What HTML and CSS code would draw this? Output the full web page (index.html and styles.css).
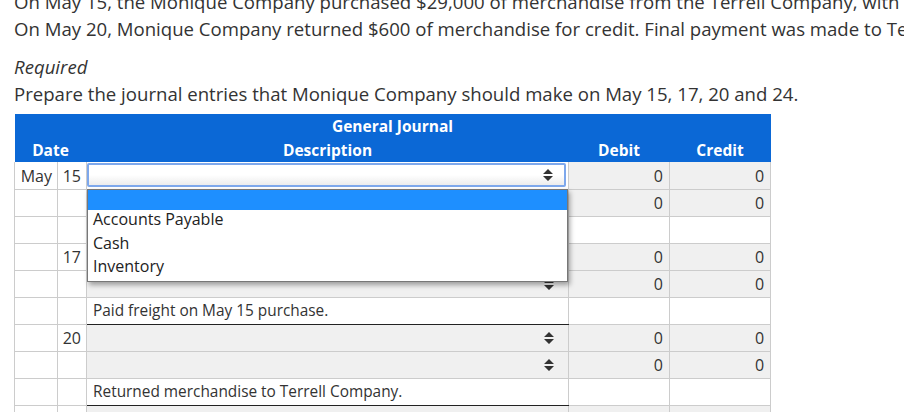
FILE: index.html
```html
<!DOCTYPE html>
<html>
<head>
<meta charset="utf-8">
<link rel="stylesheet" href="styles.css">
</head>
<body>
<div class="page">
  <p class="intro">On May 15, the Monique Company purchased $29,000 of merchandise from the Terrell Company, with terms of 2/10, n/30.</p>
  <p class="intro">On May 20, Monique Company returned $600 of merchandise for credit. Final payment was made to Terrell Company on May 24.</p>
  <p class="req"><em>Required</em><br>Prepare the journal entries that Monique Company should make on May 15, 17, 20 and 24.</p>
  <table class="journal">
    <colgroup>
      <col class="c-mon"><col class="c-day"><col class="c-desc"><col class="c-amt"><col class="c-amt">
    </colgroup>
    <thead>
      <tr class="h1"><th colspan="5">General Journal</th></tr>
      <tr class="h2"><th colspan="2">Date</th><th>Description</th><th>Debit</th><th>Credit</th></tr>
    </thead>
    <tbody>
      <tr>
        <td class="mon">May</td><td class="day">15</td>
        <td class="desc sel-cell">
          <div class="anchor">
            <div class="select focus"><svg class="arr" viewBox="0 0 10 12" width="10" height="12"><path d="M5 0 L10 5 L0 5 Z M0 7 L10 7 L5 12 Z" fill="#333"/></svg></div>
            <ul class="menu">
              <li class="hl">&nbsp;</li>
              <li class="first">Accounts Payable</li>
              <li>Cash</li>
              <li>Inventory</li>
            </ul>
          </div>
        </td>
        <td class="amt">0</td><td class="amt">0</td>
      </tr>
      <tr>
        <td></td><td></td>
        <td class="desc grey"><div class="select"><svg class="arr" viewBox="0 0 10 12" width="10" height="12"><path d="M5 0 L10 5 L0 5 Z M0 7 L10 7 L5 12 Z" fill="#333"/></svg></div></td>
        <td class="amt">0</td><td class="amt">0</td>
      </tr>
      <tr>
        <td></td><td></td><td class="desc"></td><td class="blank"></td><td class="blank"></td>
      </tr>
      <tr>
        <td></td><td class="day">17</td>
        <td class="desc grey"><div class="select"><svg class="arr" viewBox="0 0 10 12" width="10" height="12"><path d="M5 0 L10 5 L0 5 Z M0 7 L10 7 L5 12 Z" fill="#333"/></svg></div></td>
        <td class="amt">0</td><td class="amt">0</td>
      </tr>
      <tr>
        <td></td><td></td>
        <td class="desc grey"><div class="select"><svg class="arr" viewBox="0 0 10 12" width="10" height="12"><path d="M5 0 L10 5 L0 5 Z M0 7 L10 7 L5 12 Z" fill="#333"/></svg></div></td>
        <td class="amt">0</td><td class="amt">0</td>
      </tr>
      <tr>
        <td></td><td></td><td class="desc note">Paid freight on May 15 purchase.</td><td class="blank"></td><td class="blank"></td>
      </tr>
      <tr>
        <td></td><td class="day">20</td>
        <td class="desc grey"><div class="select"><svg class="arr" viewBox="0 0 10 12" width="10" height="12"><path d="M5 0 L10 5 L0 5 Z M0 7 L10 7 L5 12 Z" fill="#333"/></svg></div></td>
        <td class="amt">0</td><td class="amt">0</td>
      </tr>
      <tr>
        <td></td><td></td>
        <td class="desc grey"><div class="select"><svg class="arr" viewBox="0 0 10 12" width="10" height="12"><path d="M5 0 L10 5 L0 5 Z M0 7 L10 7 L5 12 Z" fill="#333"/></svg></div></td>
        <td class="amt">0</td><td class="amt">0</td>
      </tr>
      <tr>
        <td></td><td></td><td class="desc note">Returned merchandise to Terrell Company.</td><td class="blank"></td><td class="blank"></td>
      </tr>
      <tr>
        <td></td><td class="day">24</td>
        <td class="desc grey"><div class="select"><svg class="arr" viewBox="0 0 10 12" width="10" height="12"><path d="M5 0 L10 5 L0 5 Z M0 7 L10 7 L5 12 Z" fill="#333"/></svg></div></td>
        <td class="amt">0</td><td class="amt">0</td>
      </tr>
    </tbody>
  </table>
</div>
</body>
</html>
```
FILE: styles.css
```css
html, body {
  margin: 0;
  padding: 0;
  background: #fff;
  overflow: hidden;
}
body {
  font-family: "Open Sans", "Liberation Sans", sans-serif;
  color: #333;
}
.page {
  padding-left: 14px;
  margin-top: -12px;
  width: 1400px;
}
.intro {
  margin: 0;
  font-size: 18.6px;
  line-height: 27px;
  white-space: nowrap;
}
.req {
  margin: 11px 0 0 0;
  font-size: 18.6px;
  line-height: 27px;
  white-space: nowrap;
}
.journal {
  margin-top: 7px;
  border-collapse: collapse;
  table-layout: fixed;
  width: 756px;
  font-size: 16px;
}
.c-mon { width: 43px; }
.c-day { width: 29px; }
.c-desc { width: 482px; }
.c-amt { width: 101px; }
.journal thead th {
  background: #0b68d6;
  color: #fff;
  font-weight: 700;
  font-size: 15.5px;
  padding: 0;
  text-align: center;
}
.h1 th { height: 24px; line-height: 22px; }
.h2 th { height: 24px; line-height: 24px; }
.journal tbody td {
  height: 26px;
  border: 1px solid #cccccc;
  padding: 0;
  line-height: 26px;
  background: #fff;
}
.journal tbody tr:first-child td { border-top: none; }
.mon, .day {
  text-align: right;
  padding-right: 5px !important;
}
.journal tbody td.amt {
  background: #f0f0f0;
  text-align: right;
  padding-right: 6px;
}
.journal tbody td.desc.grey { background: #f0f0f0; }
.journal tbody td.note {
  padding-left: 6px;
  font-size: 15.4px;
  border-bottom: 1px solid #222;
}
.sel-cell { position: relative; }
.anchor { position: relative; height: 26px; }
.select {
  height: 26px;
  position: relative;
  display: flex;
  align-items: center;
  justify-content: flex-end;
  padding-right: 14px;
  box-sizing: border-box;
}
.select.focus {
  height: 24px;
  margin: 1px 2px 0 0;
  border: 2px solid #7ea8ec;
  border-radius: 2px;
  background: linear-gradient(#ffffff 50%, #ececec);
  padding-right: 11px;
}
.arr { display: block; }
.menu {
  position: absolute;
  top: 26px;
  left: 0;
  width: 481px;
  margin: 0;
  padding: 0 0 2px 0;
  list-style: none;
  background: #fff;
  border: 1px solid #777;
  box-sizing: border-box;
  box-shadow: 2px 3px 5px rgba(0,0,0,0.35);
  z-index: 5;
  line-height: 23.5px;
  font-size: 16px;
  color: #222;
}
.menu li { padding-left: 5px; height: 23.5px; }
.menu li.hl { background: #1e8fff; height: 20px; }
.menu li.first { margin-top: -2px; }
```
